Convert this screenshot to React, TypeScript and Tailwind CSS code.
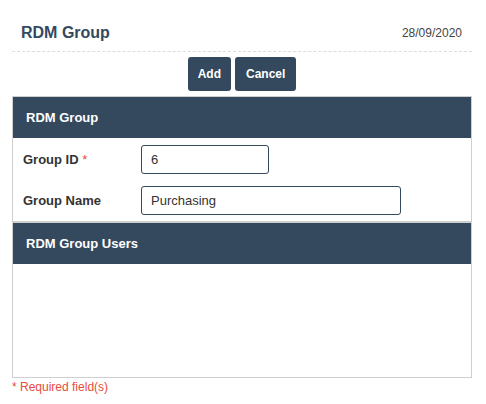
import React from 'react';

function Field({ label, value, required, width }: { label: string; value: string; required?: boolean; width: string }) {
  return (
    <div className="flex items-center h-[29px]">
      <label className="w-[118px] shrink-0 text-[13px] font-bold text-[#333]">
        {label}
        {required && <span className="text-[#e74c3c] font-normal"> *</span>}
      </label>
      <input
        readOnly
        value={value}
        className={`${width} h-[29px] border border-[#34495e] rounded-[3px] pl-[9px] text-[13px] text-[#333] outline-none`}
      />
    </div>
  );
}

function PanelHeader({ title }: { title: string }) {
  return (
    <div className="h-[41px] bg-[#34495e] flex items-center pl-[13px] text-[13px] font-bold text-white">
      {title}
    </div>
  );
}

export default function App() {
  return (
    <div className="w-[486px] h-[404px] bg-white pl-3 pr-[14px] font-['Liberation_Sans',Arial,sans-serif]">
      <div className="h-[52px] pt-[15px] flex items-center justify-between border-b border-dashed border-[#dcdcdc] pl-[9px] pr-[10px]">
        <h1 className="text-[16px] font-bold text-[#34495e]">RDM Group</h1>
        <span className="text-[12px] text-[#444]">28/09/2020</span>
      </div>

      <div className="flex justify-center gap-1 mt-[5px]">
        <button className="h-[34px] px-[10px] rounded-[3px] bg-[#34495e] text-white text-[12px] font-bold">Add</button>
        <button className="h-[34px] px-[11px] rounded-[3px] bg-[#34495e] text-white text-[12px] font-bold">Cancel</button>
      </div>

      <div className="mt-[5px] border border-[#cfcfcf]">
        <PanelHeader title="RDM Group" />
        <div className="pt-[7px] pb-[6px] pl-[10px] flex flex-col gap-3">
          <Field label="Group ID" value="6" required width="w-[128px]" />
          <Field label="Group Name" value="Purchasing" width="w-[260px]" />
        </div>
      </div>

      <div className="border border-[#cfcfcf]">
        <PanelHeader title="RDM Group Users" />
        <div className="h-[113px]" />
      </div>

      <p className="mt-[2px] text-[12px] leading-[15px] text-[#e74c3c]">* Required field(s)</p>
    </div>
  );
}
